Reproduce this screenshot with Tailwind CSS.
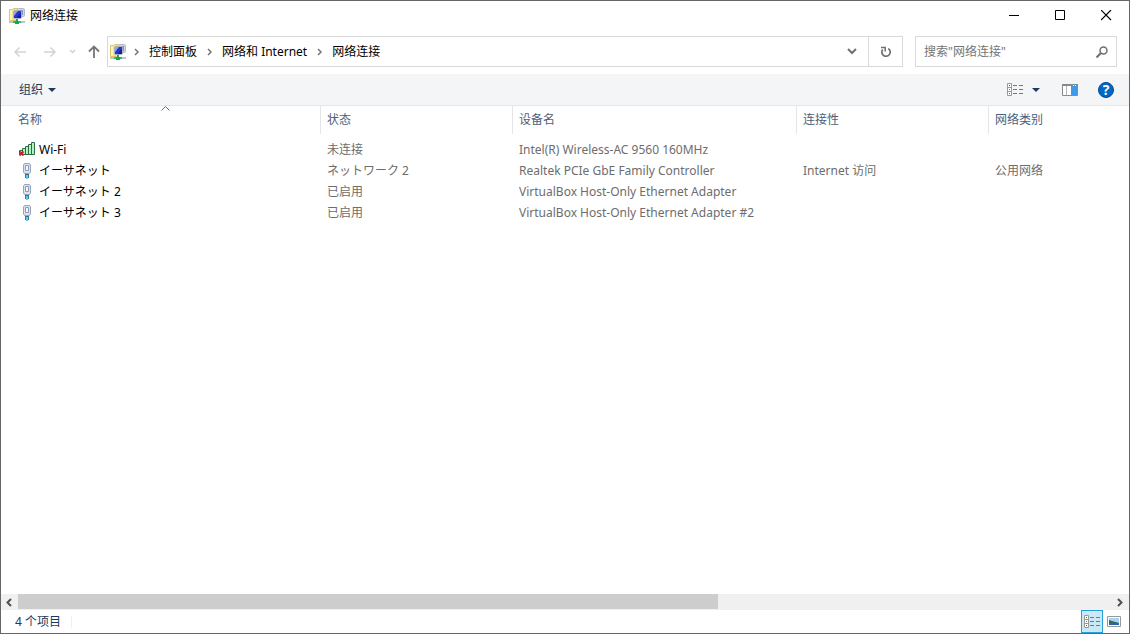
<!DOCTYPE html>
<html lang="zh-CN">
<head>
  <meta charset="UTF-8">
  <meta name="viewport" content="width=device-width, initial-scale=1.0">
  <title>网络连接</title>
  <script src="https://cdn.jsdelivr.net/npm/@tailwindcss/browser@4"></script>
</head>
<body class="bg-white font-['Noto_Sans','Noto_Sans_CJK_SC',sans-serif] text-xs text-black">

  <!-- Shared icons -->
  <svg class="hidden">
    <symbol id="icon-network" viewBox="0 0 16 16">
      <path d="M0.500 1.500h3l1-1h4v12h-8z" fill="#f5e08e" stroke="#e0c468"/>
      <path d="M1 2h2v10H1z" fill="#fff3b8"/>
      <rect x="8.500" y="0.500" width="7" height="8" rx="1" fill="#d3d7dc" stroke="#b4bac2"/>
      <rect x="10" y="2" width="4" height="5" fill="#7d92cf"/>
      <rect x="4.500" y="2.500" width="8" height="8" rx="1" fill="#c4cbdb" stroke="#a9b1c2"/>
      <rect x="5" y="3" width="7" height="7" fill="#2338c4"/>
      <path d="M5 3h4L5 8z" fill="#8fa5f0"/>
      <path d="M8 9l4-4v5H8z" fill="#1520a0"/>
      <path d="M0 13h16v2H0z" fill="#bfc5c5"/>
      <path d="M4 13h8v2H4z" fill="#2bbd70"/>
      <path d="M7 11h2v2h1v3H6v-3h1z" fill="#12a858"/>
    </symbol>
    <symbol id="icon-plug" viewBox="0 0 10 16">
      <path d="M2.500 0.500h5l1 1.500v7l-1 1.500h-5L1.500 9V2z" fill="#dce3ee" stroke="#98a5ba"/>
      <path d="M3.500 2.500h3v5h-3z" fill="#f5f8fc" stroke="#8d9ab2"/>
      <path d="M3 11h4v1H3z" fill="#3f6f8c"/>
      <path d="M3 12h1v3H3zM6 12h1v3H6z" fill="#1b87b8"/>
      <path d="M4 12h2v4H4z" fill="#6cc5e8"/>
    </symbol>
    <symbol id="icon-wifi-off" viewBox="0 0 16 15">
      <path d="M0.500 8.500h3v4h-3zM3.500 6.500h3v6h-3zM6.500 4.500h3v8h-3zM9.500 2.500h3v10h-3zM12.500 0.500h3v12h-3z" fill="#b5f2c2" stroke="#2f6b42"/>
      <path d="M0.500 9.500l4 4M4.500 9.500l-4 4" stroke="#c5282c" stroke-width="1.800" fill="none"/>
    </symbol>
    <symbol id="icon-details" viewBox="0 0 17 13">
      <path d="M0.500 0.500h4v12h-4zM0.500 4.500h4M0.500 8.500h4" fill="#fff" stroke="#999"/>
      <path d="M2 2h1v1H2z" fill="#555"/>
      <path d="M2 6h1v1H2z" fill="#3b82d6"/>
      <path d="M2 10h1v1H2z" fill="#d13438"/>
      <path d="M6 2.500h4m2 0h4M6 6.500h4m2 0h4M6 10.500h4m2 0h4" stroke="#777"/>
    </symbol>
    <symbol id="icon-chevron" viewBox="0 0 6 8">
      <path d="M1 1l3 3-3 3" fill="none" stroke="#777" stroke-width="1.500"/>
    </symbol>
  </svg>

  <!-- Window -->
  <div class="flex h-screen flex-col border border-[#666]">

    <!-- Title bar -->
    <header class="flex h-[29px] shrink-0 items-center">
      <svg class="ml-2 size-4"><use href="#icon-network"/></svg>
      <h1 class="ml-[5px] flex-1">网络连接</h1>
      <button type="button" aria-label="最小化" class="flex h-full w-[46px] items-center justify-center">
        <svg class="size-[11px]" viewBox="0 0 11 11"><path d="M0 5.500h10" stroke="#000"/></svg>
      </button>
      <button type="button" aria-label="最大化" class="flex h-full w-[46px] items-center justify-center">
        <svg class="size-[11px]" viewBox="0 0 11 11"><path d="M0.500 0.500h9v9h-9z" fill="none" stroke="#000"/></svg>
      </button>
      <button type="button" aria-label="关闭" class="flex h-full w-[46px] items-center justify-center">
        <svg class="size-[11px]" viewBox="0 0 11 11"><path d="M0 0l10 10M10 0L0 10" stroke="#000" stroke-width="1.200"/></svg>
      </button>
    </header>

    <!-- Navigation and address bar -->
    <div class="flex shrink-0 items-center pt-[6px] pr-3 pb-[7px] pl-3">
      <nav class="flex items-center">
        <button type="button" aria-label="后退" disabled>
          <svg class="h-3 w-[14px]" viewBox="0 0 14 12"><path d="M13 6H2M6.500 1.500L2 6l4.500 4.500" fill="none" stroke="#d4d4d4" stroke-width="1.500"/></svg>
        </button>
        <button type="button" aria-label="前进" class="ml-4" disabled>
          <svg class="h-3 w-[14px]" viewBox="0 0 14 12"><path d="M1 6h11M7.500 1.500L12 6l-4.500 4.500" fill="none" stroke="#d4d4d4" stroke-width="1.500"/></svg>
        </button>
        <button type="button" aria-label="最近浏览的位置" class="ml-3" disabled>
          <svg class="h-[5px] w-[7px]" viewBox="0 0 7 5"><path d="M1 1l2.500 2.500L6 1" fill="none" stroke="#d0d0d0" stroke-width="1.300"/></svg>
        </button>
        <button type="button" aria-label="上移" class="ml-3">
          <svg class="h-[13px] w-3" viewBox="0 0 12 13"><path d="M6 13V2M1 6.500l5-5 5 5" fill="none" stroke="#757575" stroke-width="1.800"/></svg>
        </button>
      </nav>

      <div class="ml-[7px] flex h-[31px] flex-1 items-center border border-[#d9d9d9]">
        <svg class="ml-[2px] size-4"><use href="#icon-network"/></svg>
        <svg class="ml-2 h-2 w-[6px]"><use href="#icon-chevron"/></svg>
        <a href="#" class="ml-[9px]">控制面板</a>
        <svg class="ml-[10px] h-2 w-[6px]"><use href="#icon-chevron"/></svg>
        <a href="#" class="ml-[9px]">网络和 Internet</a>
        <svg class="ml-[10px] h-2 w-[6px]"><use href="#icon-chevron"/></svg>
        <a href="#" class="ml-[9px]">网络连接</a>
        <button type="button" aria-label="以前的位置" class="ml-auto flex h-full w-8 items-center justify-center">
          <svg class="h-[7px] w-[10px]" viewBox="0 0 10 7"><path d="M1 1l4 4 4-4" fill="none" stroke="#707070" stroke-width="2"/></svg>
        </button>
        <button type="button" aria-label="刷新" class="flex h-full w-[34px] items-center justify-center border-l border-[#d9d9d9]">
          <svg class="size-3" viewBox="0 0 12 12">
            <path d="M8.300 2.500A4.200 4.200 0 1 1 2.700 3.500" fill="none" stroke="#707070" stroke-width="1.700"/>
            <path d="M1 1.500h4.200v4" fill="none" stroke="#707070" stroke-width="1.500"/>
          </svg>
        </button>
      </div>

      <div class="ml-3 flex h-[31px] w-[202px] items-center border border-[#d9d9d9] px-2">
        <input type="search" aria-label="搜索" placeholder='搜索"网络连接"' class="min-w-0 flex-1 outline-none placeholder:text-[#757575]">
        <button type="button" aria-label="开始搜索">
          <svg class="size-3" viewBox="0 0 12 12">
            <circle cx="7.500" cy="4.500" r="3.500" fill="none" stroke="#707070" stroke-width="1.500"/>
            <path d="M5 7L0.500 11.500" stroke="#707070" stroke-width="2"/>
          </svg>
        </button>
      </div>
    </div>

    <!-- Command bar -->
    <div class="flex h-8 shrink-0 items-center border-b border-[#e5e7ea] bg-[#f4f5f7] pr-[15px] pl-[18px] text-[#1e395b]">
      <button type="button" class="flex items-center gap-[5px]">
        组织
        <svg class="h-1 w-2" viewBox="0 0 8 4"><path d="M0 0h8L4 4z" fill="#1e395b"/></svg>
      </button>
      <button type="button" aria-label="更改视图" class="ml-auto">
        <svg class="h-[13px] w-[17px]"><use href="#icon-details"/></svg>
      </button>
      <button type="button" aria-label="更多选项" class="ml-2">
        <svg class="h-1 w-2" viewBox="0 0 8 4"><path d="M0 0h8L4 4z" fill="#1e395b"/></svg>
      </button>
      <button type="button" aria-label="预览窗格" class="ml-[22px]">
        <svg class="h-3 w-4" viewBox="0 0 16 12">
          <path d="M0.500 0.500h15v11H0.500z" fill="#fff" stroke="#8a8a8a"/>
          <path d="M0 0h16v2H0z" fill="#8a8a8a"/>
          <path d="M11 1h1v1h-1zM13 1h1v1h-1z" fill="#fff"/>
          <path d="M4.500 2v9" stroke="#b5b5b5"/>
          <path d="M9 2h6v9H9z" fill="#3c9be8"/>
        </svg>
      </button>
      <button type="button" aria-label="帮助" class="ml-5 flex size-4 items-center justify-center rounded-full border border-[#004c94] bg-[#0067c5] font-['Open_Sans',sans-serif] text-sm leading-none font-bold text-white">?</button>
    </div>

    <!-- Connection list -->
    <main class="min-h-0 flex-1 overflow-hidden">
      <table class="w-full table-fixed border-separate border-spacing-0 text-left whitespace-nowrap text-[#6d6d6d]">
        <colgroup>
          <col class="w-[320px]">
          <col class="w-48">
          <col class="w-[284px]">
          <col class="w-48">
          <col>
        </colgroup>
        <thead class="text-[#4c607a]">
          <tr class="h-7">
            <th scope="col" aria-sort="ascending" class="relative border-r border-[#e5e5e5] p-0 pl-[17px] font-normal">
              名称
              <svg class="absolute top-0 left-1/2 h-[5px] w-[9px]" viewBox="0 0 9 5"><path d="M0.500 4.500l4-4 4 4" fill="none" stroke="#6d6d6d"/></svg>
            </th>
            <th scope="col" class="border-r border-[#e5e5e5] p-0 pl-[6px] font-normal">状态</th>
            <th scope="col" class="border-r border-[#e5e5e5] p-0 pl-[6px] font-normal">设备名</th>
            <th scope="col" class="border-r border-[#e5e5e5] p-0 pl-[6px] font-normal">连接性</th>
            <th scope="col" class="p-0 pl-[6px] font-normal">网络类别</th>
          </tr>
        </thead>
        <tbody>
          <tr class="h-[5px]"><td colspan="5" class="p-0"></td></tr>
          <tr class="h-[21px]">
            <td class="p-0 pl-[18px] text-black">
              <div class="flex items-center gap-1"><svg class="h-[15px] w-4"><use href="#icon-wifi-off"/></svg>Wi-Fi</div>
            </td>
            <td class="p-0 pl-[6px]">未连接</td>
            <td class="p-0 pl-[6px]">Intel(R) Wireless-AC 9560 160MHz</td>
            <td class="p-0 pl-[6px]"></td>
            <td class="p-0 pl-[6px]"></td>
          </tr>
          <tr class="h-[21px]">
            <td class="p-0 pl-[18px] text-black">
              <div class="flex items-center gap-1"><svg class="h-4 w-4"><use href="#icon-plug"/></svg>イーサネット</div>
            </td>
            <td class="p-0 pl-[6px]">ネットワーク 2</td>
            <td class="p-0 pl-[6px]">Realtek PCIe GbE Family Controller</td>
            <td class="p-0 pl-[6px]">Internet 访问</td>
            <td class="p-0 pl-[6px]">公用网络</td>
          </tr>
          <tr class="h-[21px]">
            <td class="p-0 pl-[18px] text-black">
              <div class="flex items-center gap-1"><svg class="h-4 w-4"><use href="#icon-plug"/></svg>イーサネット 2</div>
            </td>
            <td class="p-0 pl-[6px]">已启用</td>
            <td class="p-0 pl-[6px]">VirtualBox Host-Only Ethernet Adapter</td>
            <td class="p-0 pl-[6px]"></td>
            <td class="p-0 pl-[6px]"></td>
          </tr>
          <tr class="h-[21px]">
            <td class="p-0 pl-[18px] text-black">
              <div class="flex items-center gap-1"><svg class="h-4 w-4"><use href="#icon-plug"/></svg>イーサネット 3</div>
            </td>
            <td class="p-0 pl-[6px]">已启用</td>
            <td class="p-0 pl-[6px]">VirtualBox Host-Only Ethernet Adapter #2</td>
            <td class="p-0 pl-[6px]"></td>
            <td class="p-0 pl-[6px]"></td>
          </tr>
        </tbody>
      </table>
    </main>

    <!-- Horizontal scroll bar -->
    <div class="flex h-4 shrink-0 bg-[#f0f0f0]">
      <button type="button" aria-label="向左滚动" class="flex w-[17px] items-center justify-center">
        <svg class="h-[9px] w-[7px]" viewBox="0 0 7 9"><path d="M5 1L1.500 4.500 5 8" fill="none" stroke="#505050" stroke-width="2"/></svg>
      </button>
      <div class="flex-1">
        <div class="h-[15px] w-[64%] bg-[#cdcdcd]"></div>
      </div>
      <button type="button" aria-label="向右滚动" class="flex w-[17px] items-center justify-center">
        <svg class="h-[9px] w-[7px]" viewBox="0 0 7 9"><path d="M1 1l3.500 3.500L1 8" fill="none" stroke="#505050" stroke-width="2"/></svg>
      </button>
    </div>

    <!-- Status bar -->
    <footer class="flex h-[23px] shrink-0 items-center pr-[5px] pl-[14px] text-[#1e395b]">
      <span class="border-r border-[#f0f0f0] pr-[10px] leading-3">4 个项目</span>
      <button type="button" aria-label="详细信息" class="ml-auto flex h-[23px] w-[22px] items-center justify-center border border-[#26a0da] bg-[#cbe8f6]">
        <svg class="h-[13px] w-[17px]"><use href="#icon-details"/></svg>
      </button>
      <button type="button" aria-label="大图标" class="flex w-[21px] items-center justify-center">
        <svg class="h-[11px] w-[14px]" viewBox="0 0 14 11">
          <path d="M0.500 0.500h13v10H0.500z" fill="#fff" stroke="#9a9a9a"/>
          <path d="M2 2h10v7H2z" fill="#a9d2f3"/>
          <path d="M2 4l3 1 7 2v1H2z" fill="#2f6a5a"/>
          <path d="M2 7h10v2H2z" fill="#2c62ad"/>
        </svg>
      </button>
    </footer>
  </div>

</body>
</html>
